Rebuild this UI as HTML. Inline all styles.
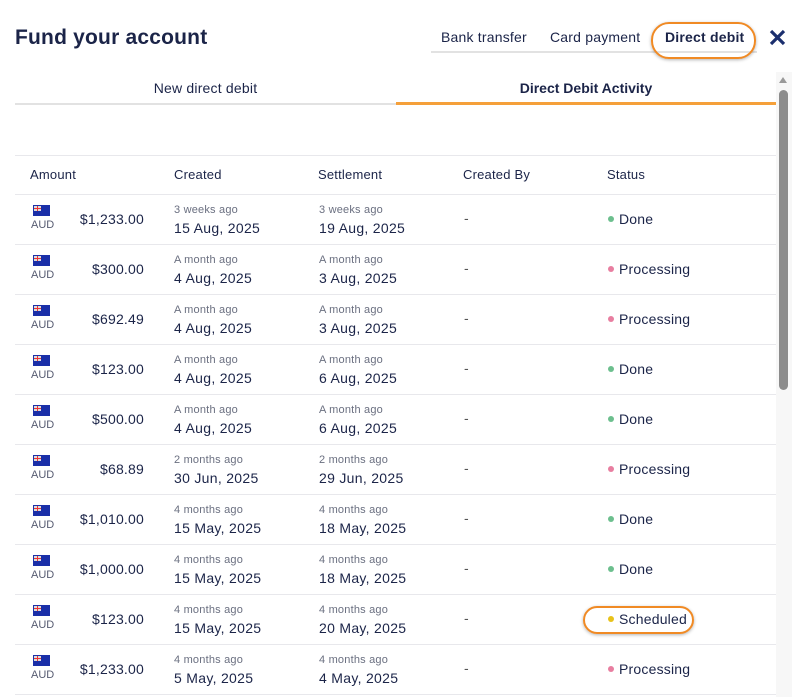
<!DOCTYPE html>
<html><head><meta charset="utf-8"><style>
*{margin:0;padding:0;box-sizing:border-box}
body{width:798px;height:697px;overflow:hidden;background:#fff;font-family:"Liberation Sans",sans-serif;color:#1b2448;position:relative}
.a{position:absolute;white-space:nowrap}
h1{position:absolute;left:15px;top:26px;font-size:21px;font-weight:bold;color:#1b2448;letter-spacing:0.2px}
.tab{font-size:14px;top:29px;letter-spacing:0.2px}
.row{position:absolute;left:15px;width:761px;height:50px;border-bottom:1px solid #e8e8ec}
.flag{position:absolute;left:18px;top:10px;width:17px;height:11px;background:#1a2fa8}
.flag:before{content:"";position:absolute;left:1px;top:1px;width:7px;height:5px;background:linear-gradient(#e33,#e33) 3px 0/1px 5px no-repeat,linear-gradient(#e33,#e33) 0 2px/7px 1px no-repeat,#ddd}
.cur{position:absolute;left:16px;top:24px;font-size:11px;color:#555a70}
.amt{position:absolute;right:632px;top:16px;font-size:14px;letter-spacing:0.2px}
.sm{position:absolute;top:9px;font-size:11px;color:#6a6f80;letter-spacing:0.2px}
.dt{position:absolute;top:25px;font-size:14px;letter-spacing:0.3px}
.dash{position:absolute;left:449px;top:15px;font-size:14px;color:#555}
.st{position:absolute;left:593px;top:16px;font-size:14px;letter-spacing:0.2px}
.st i{display:inline-block;width:6px;height:6px;border-radius:50%;margin-right:5px;vertical-align:2px}
.hd{font-size:13px;top:167px;letter-spacing:0.2px}
</style></head><body>
<h1>Fund your account</h1>
<div class="a tab" style="left:441px">Bank transfer</div>
<div class="a tab" style="left:550px">Card payment</div>
<div class="a tab" style="left:665px;font-weight:bold">Direct debit</div>
<div class="a" style="left:431px;top:51px;width:326px;height:2px;background:#e2e2e2"></div>
<div class="a" style="left:651px;top:22px;width:105px;height:37px;border:2px solid #f08a24;border-radius:18px;box-shadow:0 1px 3px rgba(0,0,0,.3)"></div>
<svg class="a" style="left:769px;top:29px" width="17" height="17" viewBox="0 0 17 17"><path d="M2 2L15 15M15 2L2 15" stroke="#1b2f6e" stroke-width="3.2"/></svg>
<div class="a" style="left:15px;top:80px;width:381px;text-align:center;font-size:14px;letter-spacing:0.2px">New direct debit</div>
<div class="a" style="left:396px;top:80px;width:380px;text-align:center;font-size:14px;font-weight:bold">Direct Debit Activity</div>
<div class="a" style="left:15px;top:103px;width:381px;height:2px;background:#e2e2e2"></div>
<div class="a" style="left:396px;top:102px;width:380px;height:3px;background:#f5a03a"></div>
<div class="a" style="left:776px;top:72px;width:16px;height:625px;background:#f7f7f7"></div>
<div class="a" style="left:779px;top:77px;width:0;height:0;border-left:4px solid transparent;border-right:4px solid transparent;border-bottom:6px solid #999"></div>
<div class="a" style="left:779px;top:90px;width:9px;height:300px;border-radius:5px;background:#8c8c8c"></div>
<div class="a" style="left:15px;top:155px;width:761px;height:1px;background:#e8e8ec"></div>
<div class="a" style="left:15px;top:194px;width:761px;height:1px;background:#e8e8ec"></div>
<div class="a hd" style="left:30px">Amount</div>
<div class="a hd" style="left:174px">Created</div>
<div class="a hd" style="left:318px">Settlement</div>
<div class="a hd" style="left:463px">Created By</div>
<div class="a hd" style="left:607px">Status</div>
<div id="rows"></div>
<div class="a" style="left:583px;top:606px;width:111px;height:28px;border:2px solid #f08a24;border-radius:14px;box-shadow:0 1px 3px rgba(0,0,0,.3)"></div>
<script>
var d=[["$1,233.00","3 weeks ago","15 Aug, 2025","3 weeks ago","19 Aug, 2025","Done"],
["$300.00","A month ago","4 Aug, 2025","A month ago","3 Aug, 2025","Processing"],
["$692.49","A month ago","4 Aug, 2025","A month ago","3 Aug, 2025","Processing"],
["$123.00","A month ago","4 Aug, 2025","A month ago","6 Aug, 2025","Done"],
["$500.00","A month ago","4 Aug, 2025","A month ago","6 Aug, 2025","Done"],
["$68.89","2 months ago","30 Jun, 2025","2 months ago","29 Jun, 2025","Processing"],
["$1,010.00","4 months ago","15 May, 2025","4 months ago","18 May, 2025","Done"],
["$1,000.00","4 months ago","15 May, 2025","4 months ago","18 May, 2025","Done"],
["$123.00","4 months ago","15 May, 2025","4 months ago","20 May, 2025","Scheduled"],
["$1,233.00","4 months ago","5 May, 2025","4 months ago","4 May, 2025","Processing"]];
var c={Done:"#6cbf8e",Processing:"#e87ea0",Scheduled:"#e8c21a"};
var h="";d.forEach(function(r,i){h+='<div class="row" style="top:'+(195+i*50)+'px"><div class="flag"></div><div class="cur">AUD</div><div class="amt">'+r[0]+'</div><div class="sm" style="left:159px">'+r[1]+'</div><div class="dt" style="left:159px">'+r[2]+'</div><div class="sm" style="left:304px">'+r[3]+'</div><div class="dt" style="left:304px">'+r[4]+'</div><div class="dash">-</div><div class="st"><i style="background:'+c[r[5]]+'"></i>'+r[5]+'</div></div>'});
document.getElementById("rows").innerHTML=h;
</script>
</body></html>
